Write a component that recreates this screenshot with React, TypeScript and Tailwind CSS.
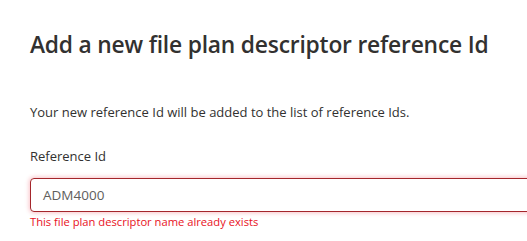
export default function App() {
  return (
    <div className="w-[527px] h-[241px] overflow-hidden bg-white font-['Open_Sans',sans-serif] text-[#323130]">
      <div className="pl-[30px] pt-[30px]">
        <h1 className="text-[22.8px] leading-[30px] font-semibold tracking-[-0.2px]">
          Add a new file plan descriptor reference Id
        </h1>
        <p className="mt-[42px] text-[13px] leading-[20px]">
          Your new reference Id will be added to the list of reference Ids.
        </p>
        <label className="block mt-[24px] text-[13px] leading-[20px]">Reference Id</label>
        <div className="mt-[12px] w-[560px] h-[34px] rounded-[4px] border border-[#a4262c] shadow-[0_0_4px_1px_rgba(232,17,35,0.25)] flex items-center px-[12px]">
          <span className="text-[13.5px] text-[#605e5c]">ADM4000</span>
        </div>
        <p className="mt-[2px] text-[11.2px] leading-[16px] text-[#e81123]">
          This file plan descriptor name already exists
        </p>
      </div>
    </div>
  );
}
